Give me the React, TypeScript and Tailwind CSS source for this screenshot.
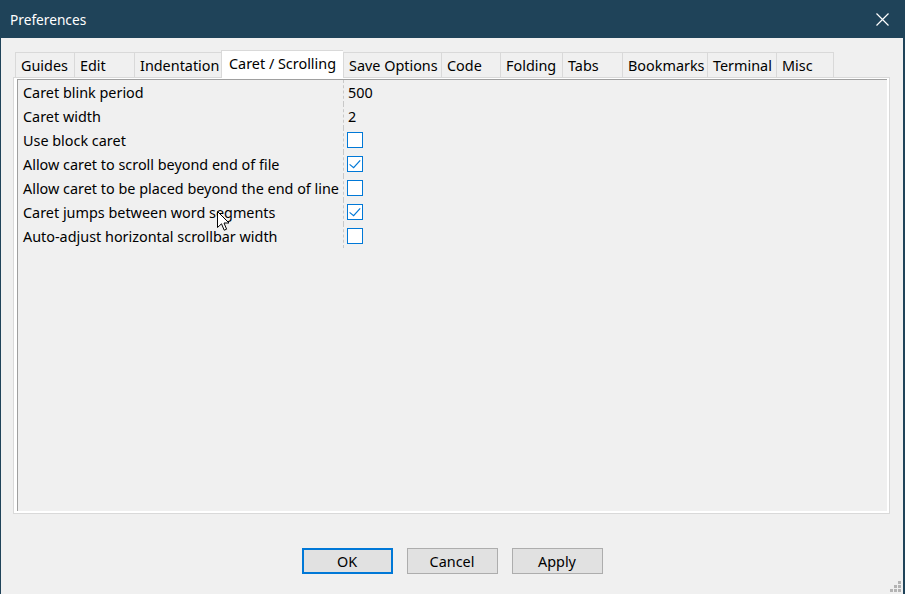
import React from "react";

const tabs: { label: string; w: string; sel?: boolean; last?: boolean }[] = [
  { label: "Guides", w: "w-[59px]" },
  { label: "Edit", w: "w-[60px]" },
  { label: "Indentation", w: "w-[87px]" },
  { label: "Caret / Scrolling", w: "w-[122px]", sel: true },
  { label: "Save Options", w: "w-[98px]" },
  { label: "Code", w: "w-[59px]" },
  { label: "Folding", w: "w-[62px]" },
  { label: "Tabs", w: "w-[60px]" },
  { label: "Bookmarks", w: "w-[85px]" },
  { label: "Terminal", w: "w-[69px]" },
  { label: "Misc", w: "w-[58px]", last: true },
];

type Row = { label: string; value?: string; check?: boolean };
const rows: Row[] = [
  { label: "Caret blink period", value: "500" },
  { label: "Caret width", value: "2" },
  { label: "Use block caret", check: false },
  { label: "Allow caret to scroll beyond end of file", check: true },
  { label: "Allow caret to be placed beyond the end of line", check: false },
  { label: "Caret jumps between word segments", check: true },
  { label: "Auto-adjust horizontal scrollbar width", check: false },
];

function CheckBox({ checked }: { checked: boolean }) {
  return (
    <div className="w-[16px] h-[16px] border border-[#0078d7] bg-white flex items-center justify-center">
      {checked && (
        <svg width="14" height="14" viewBox="0 0 14 14">
          <path d="M1.6 7.4 L5.6 10.6 L12.2 3.4" fill="none" stroke="#0078d7" strokeWidth="1.2" />
        </svg>
      )}
    </div>
  );
}

export default function App() {
  return (
    <div className="relative w-[905px] h-[594px] overflow-hidden bg-[#f0f0f0] border-l border-r-2 border-[#1f4359] flex flex-col font-['Noto_Sans',sans-serif] text-[14.4px] text-black">
      {/* Title bar */}
      <div className="h-[38px] shrink-0 bg-[#1f4359] flex items-center justify-between pl-[9px] pr-[14px] text-white">
        <span className="text-[13.7px] leading-none pt-[2px]">Preferences</span>
        <svg width="13" height="13" viewBox="0 0 13 13">
          <path d="M0.5 0.5 L12.5 12.5 M12.5 0.5 L0.5 12.5" stroke="#ffffff" strokeWidth="1.2" fill="none" />
        </svg>
      </div>

      {/* Tabs */}
      <div className="mt-[12px] ml-[14px] h-[27px] flex items-end shrink-0">
        {tabs.map((t) =>
          t.sel ? (
            <div
              key={t.label}
              className={`${t.w} h-[28px] -mb-px relative z-10 bg-white border-l border-t border-[#d9d9d9] flex items-center pl-[7px] pb-[2px] whitespace-nowrap`}
            >
              {t.label}
            </div>
          ) : (
            <div
              key={t.label}
              className={`${t.w} h-[25px] border-l border-t border-[#d9d9d9] ${t.last ? "border-r" : ""} flex items-center pl-[5px] pt-[1px] whitespace-nowrap`}
            >
              {t.label}
            </div>
          )
        )}
      </div>

      {/* Panel */}
      <div className="ml-[12px] mr-[13px] h-[437px] shrink-0 border border-[#d9d9d9] bg-white pl-[3px] pt-[1px] pr-[2px] pb-[2px]">
        <div className="h-full border-l border-t border-[#a0a0a0] bg-[#f0f0f0] flex flex-col">
          {rows.map((r) => (
            <div key={r.label} className="flex h-[24px]">
              <div className="w-[325px] pl-[5px] pt-[1px] flex items-center whitespace-nowrap">{r.label}</div>
              <div
                className={`border-l border-dashed border-[#c8c8c8] flex items-center ${
                  r.value !== undefined ? "pl-[4px] pt-[1px]" : "pl-[3px]"
                }`}
              >
                {r.value !== undefined ? r.value : <CheckBox checked={!!r.check} />}
              </div>
            </div>
          ))}
        </div>
      </div>

      {/* Buttons */}
      <div className="mt-[34px] flex justify-center gap-[14px]">
        <button className="w-[91px] h-[26px] border-2 border-[#0078d7] bg-[#e1e1e1] flex items-center justify-center leading-none pt-[2px]">
          OK
        </button>
        <button className="w-[91px] h-[26px] border border-[#adadad] bg-[#e1e1e1] flex items-center justify-center leading-none pt-[2px]">
          Cancel
        </button>
        <button className="w-[91px] h-[26px] border border-[#adadad] bg-[#e1e1e1] flex items-center justify-center leading-none pt-[2px]">
          Apply
        </button>
      </div>

      {/* Resize grip */}
      <svg className="absolute right-[2px] bottom-[2px]" width="11" height="11" viewBox="0 0 11 11">
        <rect x="8" y="0" width="3" height="3" fill="#b4b4b4" />
        <rect x="4" y="4" width="3" height="3" fill="#b4b4b4" />
        <rect x="8" y="4" width="3" height="3" fill="#b4b4b4" />
        <rect x="0" y="8" width="3" height="3" fill="#b4b4b4" />
        <rect x="4" y="8" width="3" height="3" fill="#b4b4b4" />
        <rect x="8" y="8" width="3" height="3" fill="#b4b4b4" />
      </svg>

      {/* Mouse cursor */}
      <svg className="absolute left-[216px] top-[211px]" width="13" height="21" viewBox="0 0 13 21">
        <path
          d="M0.5 0.5 L0.5 16.5 L4.5 12.8 L7.2 19.2 L9.6 18.2 L7 12 L12 12 Z"
          fill="#ffffff"
          stroke="#000000"
          strokeWidth="1"
          strokeLinejoin="miter"
        />
      </svg>
    </div>
  );
}
